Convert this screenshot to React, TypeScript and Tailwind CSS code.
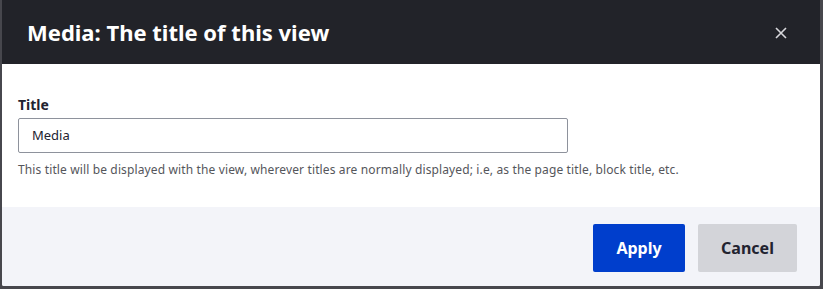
import React from "react";

export default function App() {
  return (
    <div
      className="w-[823px] h-[289px] bg-[#47474d] overflow-hidden"
      style={{ fontFamily: '"Noto Sans", "Open Sans", sans-serif' }}
    >
      <div className="ml-[2px] w-[818px] h-[286px] flex flex-col bg-white rounded-b-[2px] overflow-hidden">
        <div className="h-[64px] shrink-0 bg-[#222329] flex items-center justify-between pl-[25px] pr-[33px]">
          <h1 className="text-white text-[22px] font-bold leading-none mt-[-1px]">
            Media: The title of this view
          </h1>
          <svg width="12" height="12" viewBox="0 0 12 12" className="mt-[2px]">
            <path d="M1 1 L11 11 M11 1 L1 11" stroke="#d8d8dc" strokeWidth="1.6" />
          </svg>
        </div>
        <div className="h-[143px] shrink-0 bg-white pl-[16px] pt-[32px]">
          <label className="block text-[14px] font-bold text-[#222330] leading-[18px]">Title</label>
          <div className="mt-[4px] w-[550px] h-[35px] border border-[#8e929c] rounded-[2px] flex items-center pl-[13px] text-[13px] text-[#222330]">
            Media
          </div>
          <p className="mt-[8px] text-[12px] tracking-[0.13px] text-[#55565b] leading-[18px]">
            This title will be displayed with the view, wherever titles are normally displayed; i.e, as the page title, block title, etc.
          </p>
        </div>
        <div className="flex-1 bg-[#f3f4f9] flex justify-end items-start pt-[17px] pr-[23px] gap-[13px]">
          <button className="w-[92px] h-[48px] rounded-[2px] bg-[#003ecc] text-white text-[16px] font-bold">
            Apply
          </button>
          <button className="w-[99px] h-[48px] rounded-[2px] bg-[#d3d4d9] text-[#222330] text-[16px] font-bold">
            Cancel
          </button>
        </div>
      </div>
    </div>
  );
}
